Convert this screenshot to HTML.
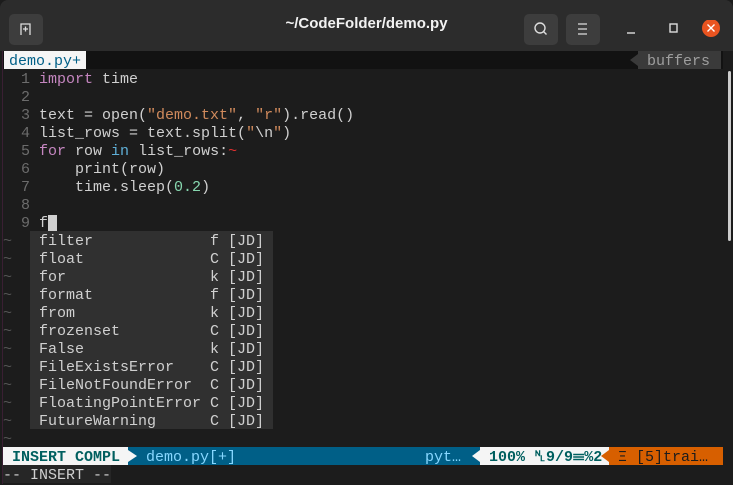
<!DOCTYPE html><html><head><style>
body{margin:0;width:733px;height:484px;background:#1c1c1c;overflow:hidden;position:relative;font-family:"Liberation Mono",monospace}
.tb{position:absolute;left:0;top:0;width:733px;height:51px;background:#2c2c2c;border-radius:8px 8px 0 0}
.btn{position:absolute;top:14px;width:34px;height:31px;background:#3d3d3d;border-radius:5px}
.title{position:absolute;top:15px;left:0;width:733px;text-align:center;color:#f2f2f2;font:bold 15px "Liberation Sans",sans-serif}
.ed{position:absolute;left:2px;top:51px;width:720px;height:433px;background:#1c1c1c;border-left:1px solid #3a1f33}
.r{position:absolute;left:0;height:16px;padding-top:2px;line-height:18px;font-size:15px;white-space:pre;color:#d0d0d0}
.n{color:#6c6c6c}.k{color:#c586c0}.s{color:#d08a5c}.b{color:#5fafd7}.g{color:#87d7af}.t{color:#555}
</style></head><body>
<div class="tb">
<div class="btn" style="left:9px"><svg width="34" height="31"><path d="M12 21V10h9v11M14 15h5M16.5 12.5v5" stroke="#ddd" fill="none" stroke-width="1.3"/></svg></div>
<div class="title">~/CodeFolder/demo.py</div>
<div class="btn" style="left:524px"><svg width="34" height="31"><circle cx="16" cy="14" r="5" stroke="#ddd" fill="none" stroke-width="1.4"/><path d="M19.5 17.5l3 3" stroke="#ddd" stroke-width="1.4"/></svg></div>
<div class="btn" style="left:566px"><svg width="34" height="31"><path d="M12 10h9M12 15h9M12 20h9" stroke="#ddd" stroke-width="1.3"/></svg></div>
<svg style="position:absolute;left:625px;top:20px" width="100" height="20"><path d="M2 13h8" stroke="#ddd" stroke-width="1.4"/><rect x="45" y="4" width="7" height="8" stroke="#ddd" fill="none" stroke-width="1.4"/><circle cx="86" cy="8" r="9" fill="#e95420"/><path d="M82.5 4.5l7 7M89.5 4.5l-7 7" stroke="#fff" stroke-width="1.4"/></svg>
</div>
<div class="ed">
<div class="r" style="top:0;width:720px;background:#121212"></div>
<div class="r" style="top:0;left:1px;background:#f5f5f5;color:#005f87;padding-left:5px;padding-right:5px">demo.py+</div>
<div class="r" style="top:0;left:635px;width:83px;background:#3a3a3a;color:#9e9e9e"><svg width="8" height="18" style="position:absolute;left:-8px;top:0"><path d="M8 3L0 9l8 6z" fill="#3a3a3a"/></svg> buffers</div>
<div class="r" style="top:18px"><span class="n">  1 </span><span class="k">import</span> time</div>
<div class="r" style="top:36px"><span class="n">  2 </span></div>
<div class="r" style="top:54px"><span class="n">  3 </span>text = open(<span class="s">"demo.txt"</span>, <span class="s">"r"</span>).read()</div>
<div class="r" style="top:72px"><span class="n">  4 </span>list_rows = text.split(<span class="s">"</span>\n<span class="s">"</span>)</div>
<div class="r" style="top:90px"><span class="n">  5 </span><span class="k">for</span> row <span class="b">in</span> list_rows:<span style="color:#e03030">~</span></div>
<div class="r" style="top:108px"><span class="n">  6 </span>    print(row)</div>
<div class="r" style="top:126px"><span class="n">  7 </span>    time.sleep(<span class="g">0.2</span>)</div>
<div class="r" style="top:144px"><span class="n">  8 </span></div>
<div class="r" style="top:162px"><span class="n">  9 </span>f<span style="background:#d0d0d0"> </span></div>
<div style="position:absolute;left:27px;top:180px;width:243px;height:198px;background:#303030"></div>
<div class="r" style="top:180px"><span class="t">~  </span> filter             f [JD]</div>
<div class="r" style="top:198px"><span class="t">~  </span> float              C [JD]</div>
<div class="r" style="top:216px"><span class="t">~  </span> for                k [JD]</div>
<div class="r" style="top:234px"><span class="t">~  </span> format             f [JD]</div>
<div class="r" style="top:252px"><span class="t">~  </span> from               k [JD]</div>
<div class="r" style="top:270px"><span class="t">~  </span> frozenset          C [JD]</div>
<div class="r" style="top:288px"><span class="t">~  </span> False              k [JD]</div>
<div class="r" style="top:306px"><span class="t">~  </span> FileExistsError    C [JD]</div>
<div class="r" style="top:324px"><span class="t">~  </span> FileNotFoundError  C [JD]</div>
<div class="r" style="top:342px"><span class="t">~  </span> FloatingPointError C [JD]</div>
<div class="r" style="top:360px"><span class="t">~  </span> FutureWarning      C [JD]</div>
<div class="r" style="top:378px"><span class="t">~</span></div>
<div class="r" style="top:396px;width:720px;background:#005f87"></div>
<div class="r" style="top:396px;left:0;width:125px;background:#f5f5f5;color:#005f5f;font-weight:bold"> INSERT COMPL</div>
<svg style="position:absolute;left:125px;top:396px" width="10" height="18"><path d="M0 3l9 6-9 6z" fill="#f5f5f5"/></svg>
<div class="r" style="top:396px;left:143px;color:#87d7ff">demo.py[+]</div>
<div class="r" style="top:396px;left:422px;color:#87d7ff">pyt…</div>
<div class="r" style="top:396px;left:477px;width:129px;background:#f5f5f5;color:#005f5f;font-weight:bold"> 100% ␤9/9☰%2</div>
<svg style="position:absolute;left:469px;top:396px" width="8" height="18"><path d="M8 3L0 9l8 6z" fill="#f5f5f5"/></svg>
<div class="r" style="top:396px;left:606px;width:114px;background:#d75f00;color:#1c1c1c"> Ξ [5]trai…</div>
<svg style="position:absolute;left:598px;top:396px" width="8" height="18"><path d="M8 3L0 9l8 6z" fill="#d75f00"/></svg>
<div class="r" style="top:414px;background:#262626">-- INSERT --</div>
<div style="position:absolute;left:725px;top:20px;width:3px;height:170px;background:#ccc;border-radius:2px"></div>
</div>
</body></html>
